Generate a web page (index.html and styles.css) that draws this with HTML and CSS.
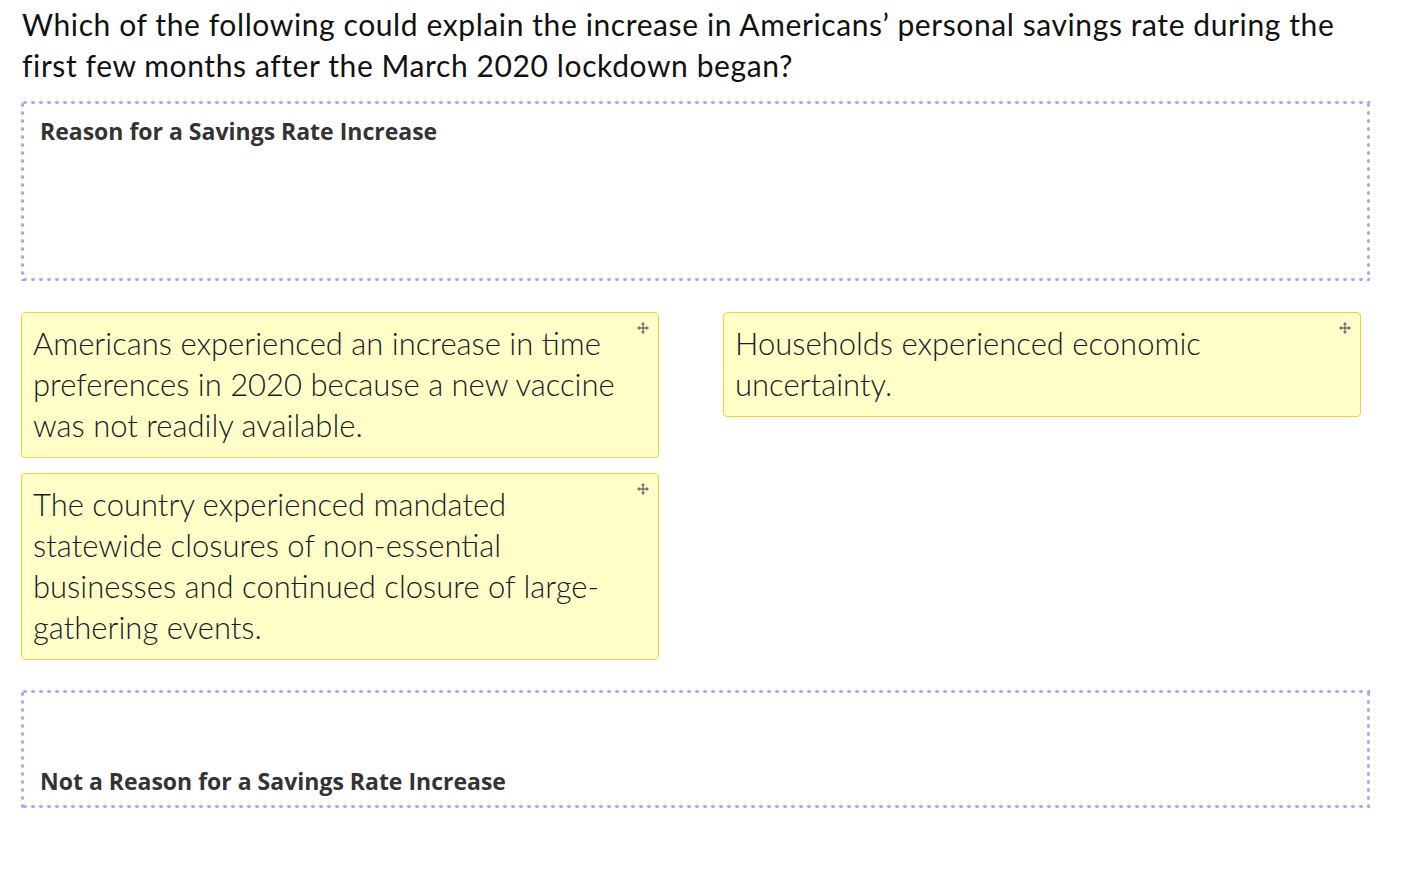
FILE: index.html
```html
<!DOCTYPE html>
<html lang="en">
<head>
<meta charset="utf-8">
<title>Savings rate question</title>
<link rel="stylesheet" href="styles.css">
</head>
<body>
<main class="page">
  <p class="question">Which of the following could explain the increase in Americans’ personal savings rate during the first few months after the March 2020 lockdown began?</p>

  <section class="zone zone-top">
    <h2 class="zone-title">Reason for a Savings Rate Increase</h2>
  </section>

  <div class="bank">
    <div class="col">
      <div class="card">
        <p>Americans experienced an increase in time preferences in 2020 because a new vaccine was not readily available.</p>
        <svg class="move" viewBox="0 0 12 12" width="12" height="12"><path d="M6 0 L8.2 2.6 H6.7 V5.3 H9.4 V3.8 L12 6 L9.4 8.2 V6.7 H6.7 V9.4 H8.2 L6 12 L3.8 9.4 H5.3 V6.7 H2.6 V8.2 L0 6 L2.6 3.8 V5.3 H5.3 V2.6 H3.8 Z"/></svg>
      </div>
      <div class="card">
        <p>The country experienced mandated statewide closures of non-essential businesses and continued closure of large-gathering events.</p>
        <svg class="move" viewBox="0 0 12 12" width="12" height="12"><path d="M6 0 L8.2 2.6 H6.7 V5.3 H9.4 V3.8 L12 6 L9.4 8.2 V6.7 H6.7 V9.4 H8.2 L6 12 L3.8 9.4 H5.3 V6.7 H2.6 V8.2 L0 6 L2.6 3.8 V5.3 H5.3 V2.6 H3.8 Z"/></svg>
      </div>
    </div>
    <div class="col">
      <div class="card">
        <p>Households experienced economic uncertainty.</p>
        <svg class="move" viewBox="0 0 12 12" width="12" height="12"><path d="M6 0 L8.2 2.6 H6.7 V5.3 H9.4 V3.8 L12 6 L9.4 8.2 V6.7 H6.7 V9.4 H8.2 L6 12 L3.8 9.4 H5.3 V6.7 H2.6 V8.2 L0 6 L2.6 3.8 V5.3 H5.3 V2.6 H3.8 Z"/></svg>
      </div>
    </div>
  </div>

  <section class="zone zone-bottom">
    <h2 class="zone-title">Not a Reason for a Savings Rate Increase</h2>
  </section>
</main>
</body>
</html>
```

FILE: styles.css
```css
html, body {
  margin: 0;
  padding: 0;
  background: #ffffff;
}

.page {
  padding: 4px 34px 0 21px;
  font-family: Lato, "Noto Sans", sans-serif;
}

.question {
  margin: 0 0 15px 1px;
  font-size: 30px;
  line-height: 41px;
  letter-spacing: 0.6px;
  color: #111111;
}

.zone {
  border: 3px solid transparent;
  box-sizing: border-box;
  display: flex;
  flex-direction: column;
  padding: 0 16px;
  background:
    radial-gradient(circle at 4px 1.5px, #a3abf6 1.5px, rgba(163, 171, 246, 0) 2px) left top / 8px 3px repeat-x,
    radial-gradient(circle at 4px 1.5px, #a3abf6 1.5px, rgba(163, 171, 246, 0) 2px) left bottom / 8px 3px repeat-x,
    radial-gradient(circle at 1.5px 4px, #a3abf6 1.5px, rgba(163, 171, 246, 0) 2px) left top / 3px 8px repeat-y,
    radial-gradient(circle at 1.5px 4px, #a3abf6 1.5px, rgba(163, 171, 246, 0) 2px) right top / 3px 8px repeat-y;
  background-origin: border-box;
  background-clip: border-box;
}

.zone-top {
  height: 180px;
  justify-content: flex-start;
  padding-top: 12px;
}

.zone-bottom {
  height: 118px;
  justify-content: flex-end;
  padding-bottom: 9px;
}

.zone-title {
  margin: 0;
  font-family: "Open Sans", Lato, sans-serif;
  font-size: 23px;
  line-height: 30px;
  font-weight: 700;
  color: #333333;
}

.bank {
  display: grid;
  grid-template-columns: 638px 638px;
  column-gap: 64px;
  margin: 31px 0 30px;
}

.col {
  display: flex;
  flex-direction: column;
  gap: 15px;
  align-items: stretch;
}

.card {
  position: relative;
  background: #ffffc8;
  border: 1px solid #f3cf3c;
  border-radius: 4px;
  padding: 10px 40px 11px 11px;
}

.card p {
  margin: 0;
  font-size: 31px;
  line-height: 41px;
  font-weight: 300;
  color: #1a1a28;
}

.move {
  position: absolute;
  top: 9px;
  right: 9px;
  fill: #6f6f6f;
}
```
